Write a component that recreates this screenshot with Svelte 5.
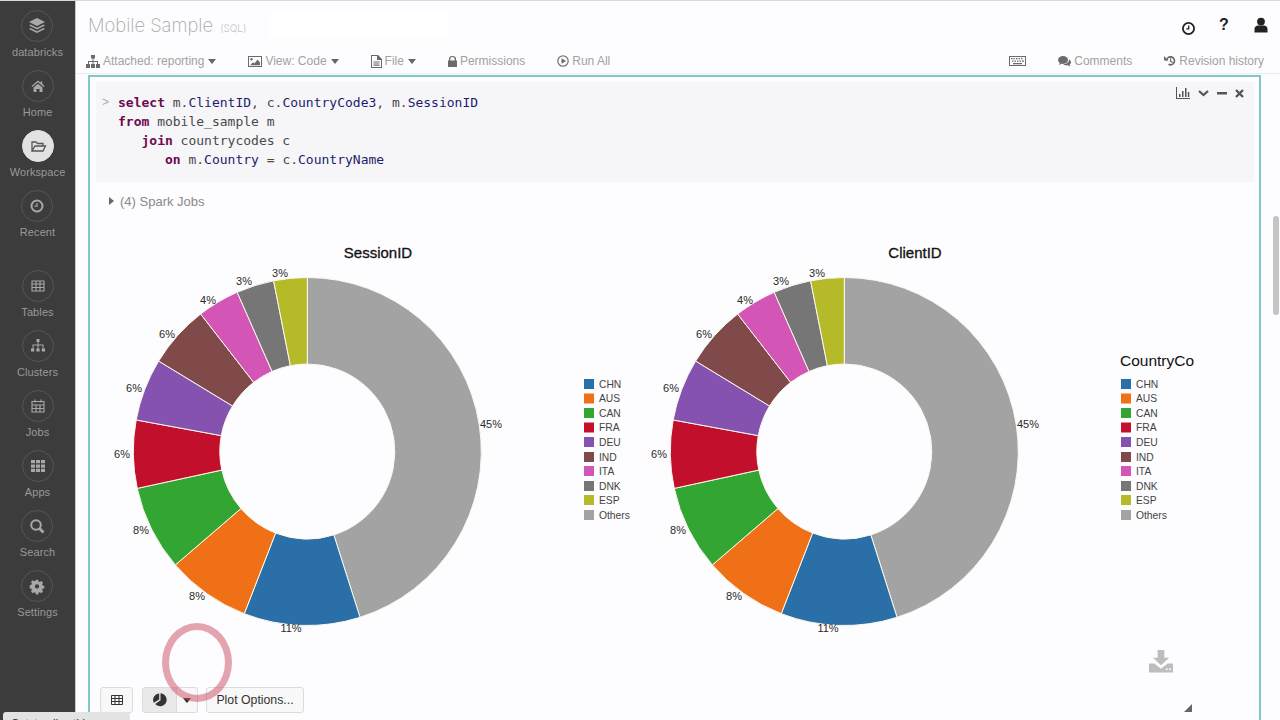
<script>
  const nav = [
    { label: 'databricks', icon: 'layers' },
    { label: 'Home', icon: 'home' },
    { label: 'Workspace', icon: 'folder', active: true },
    { label: 'Recent', icon: 'clock' },
    { label: 'Tables', icon: 'table', gap: true },
    { label: 'Clusters', icon: 'tree' },
    { label: 'Jobs', icon: 'cal' },
    { label: 'Apps', icon: 'apps' },
    { label: 'Search', icon: 'search' },
    { label: 'Settings', icon: 'gear' }
  ];
  const segs = [
    { name: 'Others', from: 0, to: 45.1, color: '#a3a3a3', pct: '45%', lx: 401, ly: 196 },
    { name: 'CHN', from: 45.1, to: 55.9, color: '#2a6fa8', pct: '11%', lx: 201, ly: 400 },
    { name: 'AUS', from: 55.9, to: 63.7, color: '#f07018', pct: '8%', lx: 107, ly: 368 },
    { name: 'CAN', from: 63.7, to: 71.6, color: '#33a532', pct: '8%', lx: 51, ly: 302 },
    { name: 'FRA', from: 71.6, to: 77.9, color: '#c2102c', pct: '6%', lx: 32, ly: 226 },
    { name: 'DEU', from: 77.9, to: 83.7, color: '#8552b0', pct: '6%', lx: 44, ly: 160 },
    { name: 'IND', from: 83.7, to: 89.5, color: '#804a4a', pct: '6%', lx: 77, ly: 106 },
    { name: 'ITA', from: 89.5, to: 93.4, color: '#d355b5', pct: '4%', lx: 118, ly: 72 },
    { name: 'DNK', from: 93.4, to: 96.9, color: '#767676', pct: '3%', lx: 154, ly: 53 },
    { name: 'ESP', from: 96.9, to: 100, color: '#b5bb28', pct: '3%', lx: 190, ly: 45 }
  ];
  const legendOrder = ['CHN', 'AUS', 'CAN', 'FRA', 'DEU', 'IND', 'ITA', 'DNK', 'ESP', 'Others'];
  const legendY = [152, 166.5, 181, 195.5, 210, 225, 239, 254, 268, 283];
  const legend = legendOrder.map((n, i) => ({ name: n, y: legendY[i], color: segs.find((s) => s.name === n).color }));
  const CX = 217.3, CY = 219.5, R = 174, r = 87.5;
  function pt(rad, p) {
    const a = (p / 100) * 2 * Math.PI;
    return (CX + rad * Math.sin(a)).toFixed(2) + ' ' + (CY - rad * Math.cos(a)).toFixed(2);
  }
  function arc(s) {
    const large = s.to - s.from > 50 ? 1 : 0;
    return `M${pt(R, s.from)}A${R} ${R} 0 ${large} 1 ${pt(R, s.to)}L${pt(r, s.to)}A${r} ${r} 0 ${large} 0 ${pt(r, s.from)}Z`;
  }
  const charts = [
    { title: 'SessionID', wide: false },
    { title: 'ClientID', wide: true }
  ];
</script>

{#snippet caret()}
  <svg class="caret" width="8" height="5" viewBox="0 0 8 5"><path d="M0 0h8L4 5z" /></svg>
{/snippet}

{#snippet navIcon(n)}
  <svg width="20" height="20" viewBox="0 0 20 20" class="nav-ico">
    {#if n === 'layers'}
      <path d="M10 2l8 4-8 4-8-4z" /><path d="M3.5 8.6L10 11.8l6.5-3.2L18 9.5 10 13.5 2 9.5z" /><path d="M3.5 12L10 15.2l6.5-3.2 1.5.9-8 4-8-4z" />
    {:else if n === 'home'}
      <path d="M10 4.500L3.500 10l.8.900L10 6.200l5.700 4.700.8-.900-2.200-1.900V5.500h-1.700v1.300zM5.500 11.500V16h3v-3h3v3h3v-4.500L10 7.700z" />
    {:else if n === 'folder'}
      <path class="line" d="M4 15V6h4l1.500 1.500H15V10M4 15h11l2.500-5H7z" />
    {:else if n === 'clock'}
      <circle class="bold" cx="10" cy="10" r="5.500" /><path class="bold thin" d="M10 7v3.200H7.500" />
    {:else if n === 'table'}
      <path class="line" d="M4 5h12v10H4zM4 8h12M4 11.500h12M8 5v10M12 5v10" />
    {:else if n === 'tree'}
      <path d="M8.500 3h3v3h-3zM3 12.500h3.200v3H3zM8.400 12.500h3.200v3H8.400zM13.800 12.500H17v3h-3.200zM9.500 6h1v2.500h5v4h-1v-3h-4v3h-1v-3h-4v3h-1v-4h5z" />
    {:else if n === 'cal'}
      <path class="line" d="M4 5.500h12V16H4zM4 9h12M8 9v7M12 9v7M4 12.500h12M7 3.500v3M13 3.500v3" />
    {:else if n === 'apps'}
      <path d="M3 4h4v3.300H3zM8 4h4v3.300H8zM13 4h4v3.300h-4zM3 8.400h4v3.300H3zM8 8.400h4v3.300H8zM13 8.400h4v3.300h-4zM3 12.800h4v3.300H3zM8 12.800h4v3.300H8zM13 12.800h4v3.300h-4z" />
    {:else if n === 'search'}
      <circle class="bold" cx="9" cy="9" r="4.800" /><path class="bold heavy" d="M12.500 12.500L16.500 16.500" />
    {:else}
      <path d="M8.600 3h2.800l.4 2 1.500.7 1.800-1.100 2 2-1.100 1.800.6 1.500 2 .4v2.800l-2 .4-.6 1.500 1.100 1.800-2 2-1.800-1.100-1.500.6-.4 2H8.600l-.4-2-1.500-.6-1.800 1.100-2-2 1.100-1.800-.6-1.500-2-.4V9.400l2-.4.6-1.500-1.100-1.800 2-2 1.800 1.100 1.500-.7zM10 8.300a2.500 2.500 0 100 5 2.500 2.500 0 000-5z" transform="translate(1.500 1.200) scale(.85)" fill-rule="evenodd" />
    {/if}
  </svg>
{/snippet}

<div class="page">
  <aside class="side">
    {#each nav as n}
      <div class="nav-item" class:gap={n.gap}>
        <div class="ring" class:active={n.active}>{@render navIcon(n.icon)}</div>
        <span class="nav-label">{n.label}</span>
      </div>
    {/each}
  </aside>

  <main class="main">
    <header class="head">
      <div class="title-row">
        <h1>Mobile Sample <small>(SQL)</small></h1>
        <div class="title-blank"></div>
        <div class="top-icons">
          <svg width="15" height="15" viewBox="0 0 15 15" class="clock-top"><circle cx="7.500" cy="7.500" r="5.600" fill="none" stroke="#222" stroke-width="1.800" /><path d="M7.700 4.500v3.300H5.300" fill="none" stroke="#222" stroke-width="1.300" /></svg>
          <span class="help">?</span>
          <svg class="user" width="16" height="16" viewBox="0 0 16 16"><circle cx="8" cy="4.600" r="3.900" fill="#222" /><path d="M1.500 15.500v-3.500c0-2.200 1.800-3.400 3.500-3.400h6c1.700 0 3.500 1.200 3.500 3.400v3.500z" fill="#222" /></svg>
        </div>
      </div>
      <nav class="tools">
        <span class="tool">
          <svg width="14" height="13" viewBox="0 0 14 13"><path d="M5 0h4v3.500H5zM0 9h4v4H0zM5 9h4v4H5zM10 9h4v4h-4zM6.500 3.500h1V6H12v3h-1V7H7.500v2h-1V7H3v2H2V6h4.500z" /></svg>
          Attached: reporting {@render caret()}
        </span>
        <span class="tool">
          <svg width="14" height="11" viewBox="0 0 14 11"><path d="M0 0h14v11H0zM1 1v9h12V1z" fill-rule="evenodd" /><circle cx="3.500" cy="3.300" r="1.200" /><path d="M2 9.200l3-3 1.500 1.300L9.500 3.500 12 6.500v2.700z" /></svg>
          View: Code {@render caret()}
        </span>
        <span class="tool">
          <svg width="11" height="13" viewBox="0 0 11 13"><path d="M0 0h7l4 4v9H0zM1 1v11h9V5H6V1zM2.500 6.500h6v1h-6zM2.500 8.500h6v1h-6zM2.500 10.300h6v.8h-6z" fill-rule="evenodd" /></svg>
          File {@render caret()}
        </span>
        <span class="tool">
          <svg width="9" height="11" viewBox="0 0 9 11"><path d="M1 4.500V3a3.500 3 0 017 0v1.500h1V11H0V4.500zM2.300 4.500h4.400V3a2.200 1.900 0 00-4.400 0z" fill-rule="evenodd" /></svg>
          Permissions
        </span>
        <span class="tool">
          <svg width="12" height="12" viewBox="0 0 12 12"><circle cx="6" cy="6" r="5.200" fill="none" stroke="#777" stroke-width="1.300" /><path d="M4.500 3.300L9 6 4.500 8.700z" /></svg>
          Run All
        </span>
        <span class="tool push">
          <svg width="17" height="10" viewBox="0 0 17 10"><path d="M0 0h17v10H0zM1 1v8h15V1z" fill-rule="evenodd" /><path d="M2 2h1.500v1.300H2zM4.500 2H6v1.300H4.500zM7 2h1.500v1.300H7zM9.500 2H11v1.300H9.500zM12 2h1.500v1.300H12zM3 4.500h1.500v1.300H3zM5.500 4.500H7v1.300H5.500zM8 4.500h1.500v1.300H8zM10.500 4.500H12v1.300h-1.500zM13 4.500h2v1.300h-2zM4 7h9v1.200H4z" /></svg>
        </span>
        <span class="tool">
          <svg width="13" height="11" viewBox="0 0 13 11"><ellipse cx="5" cy="4" rx="5" ry="3.900" /><path d="M2 6.500L1 9l3-1.500zM11 3.500c1.400.6 2 1.600 2 2.700 0 1-.6 1.800-1.300 2.300l.8 2-2.700-1.200c-2 .3-3.600-.2-4.600-1.300 3 .2 6-1.500 5.800-4.500z" /></svg>
          Comments
        </span>
        <span class="tool">
          <svg width="12" height="12" viewBox="0 0 12 12"><path d="M2.500 5.800a4 4 0 112 3.500" fill="none" stroke="#666" stroke-width="1.600" /><path d="M0 1v4.500h4.500zM6 3.200h1.200V6l1.800 1-.6 1L6 6.700z" /></svg>
          Revision history
        </span>
      </nav>
    </header>

    <section class="cell">
      <div class="code">
        <span class="prompt">&gt;</span>
        <div class="cell-tools">
          <svg width="14" height="12" viewBox="0 0 14 12"><path d="M0 0h1v11h13v1H0zM3 7h1.500v3H3zM6 4h1.500v6H6zM9 1h1.500v9H9zM11.800 5h1.500v5h-1.500z" /></svg>
          <svg width="11" height="7" viewBox="0 0 11 7"><path d="M1 1l4.500 4L10 1" fill="none" stroke="#555" stroke-width="2.200" /></svg>
          <svg width="10" height="3" viewBox="0 0 10 3"><path d="M0 0h10v2.500H0z" /></svg>
          <svg width="9" height="9" viewBox="0 0 9 9"><path d="M1 1l7 7M8 1L1 8" fill="none" stroke="#555" stroke-width="2.400" /></svg>
        </div>
        <pre><b>select</b> m.<i>ClientID</i>, c.<i>CountryCode3</i>, m.<i>SessionID</i>
<b>from</b> mobile_sample m
   <b>join</b> countrycodes c
      <b>on</b> m.<i>Country</i> = c.<i>CountryName</i></pre>
      </div>

      <div class="jobs"><span class="tri"></span>(4) Spark Jobs</div>

      <div class="plots">
        {#each charts as c}
          <svg class="plot" class:wide={c.wide} viewBox={c.wide ? '0 0 567 410' : '0 0 537 410'}>
            <text class="chart-title" x="288" y="26" text-anchor="middle">{c.title}</text>
            {#each segs as s}
              <path d={arc(s)} fill={s.color} stroke="#fbf8ee" stroke-width="1" />
            {/each}
            {#each segs as s}
              <text class="pct" x={s.lx} y={s.ly} text-anchor="middle">{s.pct}</text>
            {/each}
            {#if c.wide}
              <text class="legend-title" x="493" y="134">CountryCode3</text>
            {/if}
            {#each legend as l}
              <rect x="494" y={l.y - 5} width="10" height="10" fill={l.color} />
              <text class="legend" x="509" y={l.y + 3.700}>{l.name}</text>
            {/each}
          </svg>
        {/each}
      </div>

      <div class="foot">
        <svg width="24" height="23" viewBox="0 0 25 24"><path d="M9 0h7v8h5l-8.500 8L4 8h5z" fill="#bdbdbd" /><path d="M0 14h5.500l7 5.500 7-5.500H25v9.500H0z" fill="#bdbdbd" /><circle cx="18.500" cy="20" r="1" fill="#fff" /><circle cx="21.800" cy="20" r="1" fill="#fff" /></svg>
      </div>

      <div class="btns">
        <button class="btn icon"><svg width="12" height="10" viewBox="0 0 12 10"><path d="M.5.500h11v9H.5zM.5 3.500h11M.5 6.500h11M4 .500v9M8 .500v9" fill="none" stroke="#333" /></svg></button>
        <div class="split">
          <button class="btn pie"><svg width="14" height="14" viewBox="0 0 14 14"><path d="M7.500.3A6.500 6.500 0 1 1 2.200 11L7.500 7.200z" fill="#333" /><path d="M6.200.6A6.300 6.300 0 0 0 .8 9.800L6.200 6.400z" fill="#333" /></svg></button>
          <button class="btn drop"><svg width="8" height="5" viewBox="0 0 8 5"><path d="M0 0h8L4 5z" fill="#222" /></svg></button>
        </div>
        <button class="btn plot-opt">Plot Options...</button>
        <svg class="resize" width="8" height="8" viewBox="0 0 8 8"><path d="M8 0v8H0z" fill="#666" /></svg>
      </div>
    </section>
  </main>

  <div class="click-ring"></div>
  <div class="scroll-thumb"></div>
  <div class="tip">Outstanding this</div>
</div>

<style>
  :global(body) { margin: 0; overflow: hidden; background: #fdfcfe; }
  .page {
    position: relative;
    display: flex;
    width: 1280px;
    height: 720px;
    overflow: hidden;
    background: #fdfcfe;
    border-top: 1px solid #d8d8d8;
    box-sizing: border-box;
    font-family: "Liberation Sans", Arial, sans-serif;
  }
  .side {
    flex: 0 0 76px;
    box-sizing: border-box;
    background: #3c3c3c;
    border-right: 1px solid #c9c9c9;
    display: flex;
    flex-direction: column;
    align-items: center;
    padding-top: 9px;
  }
  .nav-item { display: flex; flex-direction: column; align-items: center; height: 60px; }
  .nav-item.gap { margin-top: 20px; }
  .ring {
    width: 32px;
    height: 32px;
    box-sizing: border-box;
    border-radius: 50%;
    border: 1px solid #555;
    display: flex;
    align-items: center;
    justify-content: center;
  }
  .ring.active { background: #e2e2e2; border-color: #e2e2e2; }
  .nav-ico { fill: #a8a8a8; }
  .nav-ico .line { fill: none; stroke: #a8a8a8; stroke-width: 1.1; }
  .nav-ico .bold { fill: none; stroke: #a8a8a8; stroke-width: 2; }
  .nav-ico .thin { stroke-width: 1.200; }
  .nav-ico .heavy { stroke-width: 2.800; }
  .ring.active .nav-ico .line { stroke: #555; stroke-width: 1.300; }
  .nav-label { margin-top: 3px; font-size: 11px; line-height: 14px; color: #999; letter-spacing: .1px; }

  .main { flex: 1; min-width: 0; display: flex; flex-direction: column; }
  .head { height: 73px; box-sizing: border-box; border-bottom: 1px solid #ececec; }
  .title-row { height: 48px; display: flex; align-items: center; padding-left: 12px; }
  h1 { margin: 0; width: 181px; font-family: Inter, "Liberation Sans", sans-serif; font-weight: 200; font-size: 18.400px; color: #a8a8a8; white-space: nowrap; }
  h1 small { font-size: 10px; margin-left: 2px; }
  .title-blank { width: 180px; height: 26px; background: #fff; }
  .top-icons { margin-left: auto; display: flex; align-items: center; gap: 19px; padding-right: 11px; }
  .clock-top { margin-top: 6px; margin-right: 3px; }
  .help { font-size: 16px; font-weight: 700; color: #222; width: 12px; text-align: center; margin-right: 4px; }
  .user { margin-top: -1px; }
  .tools { display: flex; align-items: center; gap: 32px; padding: 0 16px 0 10px; height: 24px; }
  .tool { display: inline-flex; align-items: center; gap: 3px; font-family: "Liberation Sans", sans-serif; font-size: 12px; color: #a2a2a2; white-space: nowrap; }
  .tool svg { fill: #6a6a6a; }
  .tool .caret { fill: #666; margin-left: 1px; }
  .push { margin-left: auto; }

  .cell {
    margin: 1px 19px 0 12px;
    border: 2px solid #7dc9c6;
    border-bottom: 0;
    flex: 1;
    box-sizing: border-box;
    position: relative;
  }
  .code {
    position: relative;
    margin: 5px 5px 0 6px;
    height: 100px;
    background: #f6f5f8;
  }
  .prompt { position: absolute; left: 6px; top: 13px; font-size: 12px; line-height: 14px; color: #aaa; }
  .code pre {
    margin: 0;
    padding: 11px 0 0 22px;
    font-family: "DejaVu Sans Mono", monospace;
    font-size: 13px;
    line-height: 19px;
    color: #4a4a4a;
  }
  .code b { color: #6e0a4e; font-weight: 700; }
  .code i { font-style: normal; color: #1d1d6b; }
  .cell-tools { position: absolute; right: 10px; top: 5px; display: flex; align-items: center; gap: 8px; fill: #555; }
  .jobs { margin: 9px 0 0 19px; height: 20px; display: flex; align-items: center; font-size: 13px; color: #8a8a8a; gap: 6px; }
  .tri { width: 0; height: 0; border-left: 5px solid #666; border-top: 4px solid transparent; border-bottom: 4px solid transparent; }
  .plots { margin-top: 21px; height: 410px; display: flex; }
  .plot { width: 537px; height: 410px; flex: none; display: block; overflow: visible; }
  .plot.wide { width: 567px; overflow: hidden; }
  .chart-title { font-size: 15px; fill: #111; font-family: "Liberation Sans", sans-serif; stroke: #111; stroke-width: .3px; }
  .pct { font-size: 11px; fill: #2a2a2a; font-family: "Liberation Sans", sans-serif; }
  .legend { font-size: 10.300px; fill: #444; font-family: "Liberation Sans", sans-serif; }
  .legend-title { font-size: 15.500px; fill: #111; font-family: "Liberation Sans", sans-serif; }
  .foot { margin-top: 8px; height: 24px; display: flex; justify-content: flex-end; padding-right: 86px; }
  .btns { margin: 13px 0 0 10px; display: flex; align-items: flex-start; position: relative; }
  .btn {
    height: 26px;
    box-sizing: border-box;
    background: #f8f8f8;
    border: 1px solid #dcdcdc;
    border-radius: 3px;
    padding: 0;
    display: flex;
    align-items: center;
    justify-content: center;
    font-family: "Liberation Sans", sans-serif;
    font-size: 12.300px;
    color: #333;
  }
  .icon { width: 33px; }
  .split { display: flex; margin-left: 9px; }
  .pie { width: 35px; border-radius: 3px 0 0 3px; background: #e9e9e9; }
  .drop { width: 21px; border-left: 0; border-radius: 0 3px 3px 0; }
  .plot-opt { width: 98px; margin-left: 8px; }
  .resize { position: absolute; left: 1084px; top: 17px; }

  .click-ring {
    position: absolute;
    left: 162px;
    top: 622px;
    width: 70px;
    height: 79px;
    box-sizing: border-box;
    border: 7px solid rgba(206, 90, 110, .55);
    border-radius: 50%;
    filter: blur(.6px);
  }
  .scroll-thumb { position: absolute; right: 1px; top: 215px; width: 6px; height: 99px; background: #c4c4c4; border-radius: 3px; }
  .tip {
    position: absolute;
    left: 3px;
    top: 711px;
    width: 127px;
    height: 24px;
    background: #e3e3e3;
    border-radius: 3px;
    box-sizing: border-box;
    padding: 5px 0 0 8px;
    font-size: 11px;
    color: #222;
  }
</style>
